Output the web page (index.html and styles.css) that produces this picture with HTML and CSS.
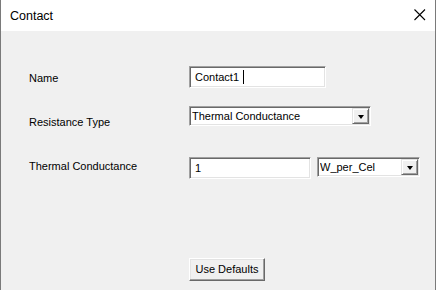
FILE: index.html
```html
<!DOCTYPE html>
<html>
<head>
<meta charset="utf-8">
<link rel="stylesheet" href="styles.css">
</head>
<body>
<div class="window">
  <div class="titlebar">
    <span class="title">Contact</span>
    <svg class="close" width="12" height="12" viewBox="0 0 12 12"><path d="M0.5 0.5 L11 11 M11 0.5 L0.5 11" stroke="#000" stroke-width="1.1" fill="none"/></svg>
  </div>
  <div class="content">
    <div class="row r1">
      <div class="label">Name</div>
      <div class="textbox name-box">Contact1<span class="caret"></span></div>
    </div>
    <div class="row r2">
      <div class="label">Resistance Type</div>
      <div class="combo type-combo"><span class="combo-text">Thermal Conductance</span><span class="dd"><span class="arrow"></span></span></div>
    </div>
    <div class="row r3">
      <div class="label">Thermal Conductance</div>
      <div class="textbox value-box">1</div>
      <div class="combo unit-combo"><span class="combo-text">W_per_Cel</span><span class="dd"><span class="arrow"></span></span></div>
    </div>
    <div class="actions">
      <div class="button">Use Defaults</div>
    </div>
  </div>
</div>
</body>
</html>
```
FILE: styles.css
```css
html, body {
  margin: 0;
  padding: 0;
}
body {
  width: 436px;
  height: 290px;
  overflow: hidden;
  font-family: "Liberation Sans", Arial, sans-serif;
  font-size: 11px;
  color: #000;
}
.window {
  box-sizing: border-box;
  width: 436px;
  height: 290px;
  background: #f0f0f0;
  border-left: 1px solid #7a7a7a;
  border-right: 1px solid #7a7a7a;
}
.titlebar {
  height: 31px;
  background: #fff;
  display: flex;
  align-items: center;
  justify-content: space-between;
  padding: 0 9px 0 9px;
}
.title {
  font-size: 12.5px;
  line-height: 16px;
}
.close {
  display: block;
  margin-top: -1px;
}
.content {
  padding: 35px 0 0 28px;
}
.row {
  display: flex;
  align-items: flex-start;
}
.label {
  width: 160px;
  line-height: 13px;
  white-space: nowrap;
}
.r1 .label { padding-top: 6px; }
.r2 { margin-top: 18px; }
.r2 .label { padding-top: 10px; }
.r3 { margin-top: 28px; }
.r3 .label { padding-top: 3px; }

.textbox {
  box-sizing: border-box;
  height: 22px;
  background: #fff;
  border-top: 1px solid #a0a0a0;
  border-left: 1px solid #a0a0a0;
  border-bottom: 1px solid #fff;
  border-right: 1px solid #fff;
  box-shadow: inset 1px 1px 0 #696969, inset -1px -1px 0 #e3e3e3;
  padding: 1px 4px 0 5px;
  line-height: 18px;
  white-space: nowrap;
}
.name-box { width: 137px; }
.value-box { width: 122px; margin-right: 6px; }
.caret {
  display: inline-block;
  width: 1px;
  height: 14px;
  background: #000;
  margin-left: 4px;
  vertical-align: -3px;
}
.combo {
  box-sizing: border-box;
  height: 20px;
  background: #fff;
  border-top: 1px solid #a0a0a0;
  border-left: 1px solid #a0a0a0;
  border-bottom: 1px solid #fff;
  border-right: 1px solid #fff;
  box-shadow: inset 1px 1px 0 #696969, inset -1px -1px 0 #e3e3e3;
  display: flex;
  align-items: center;
  padding: 1px 1px 1px 2px;
}
.type-combo { width: 182px; }
.unit-combo { width: 103px; }
.combo-text {
  flex: 1;
  line-height: 16px;
  white-space: nowrap;
  overflow: hidden;
}
.dd {
  box-sizing: border-box;
  width: 17px;
  height: 16px;
  background: #f0f0f0;
  border-top: 1px solid #e3e3e3;
  border-left: 1px solid #e3e3e3;
  border-bottom: 1px solid #696969;
  border-right: 1px solid #696969;
  box-shadow: inset 1px 1px 0 #fff, inset -1px -1px 0 #a0a0a0;
  display: flex;
  align-items: center;
  justify-content: center;
}
.arrow {
  width: 0;
  height: 0;
  border-left: 3.5px solid transparent;
  border-right: 3.5px solid transparent;
  border-top: 4px solid #000;
  margin-top: 1px;
}
.actions {
  margin-top: 79px;
  padding-left: 160px;
}
.button {
  box-sizing: border-box;
  width: 76px;
  height: 23px;
  background: #f0f0f0;
  border-top: 1px solid #fff;
  border-left: 1px solid #fff;
  border-bottom: 1px solid #696969;
  border-right: 1px solid #696969;
  box-shadow: inset -1px -1px 0 #a0a0a0, inset 1px 1px 0 #e3e3e3;
  display: flex;
  align-items: center;
  justify-content: center;
  line-height: 13px;
}
```
